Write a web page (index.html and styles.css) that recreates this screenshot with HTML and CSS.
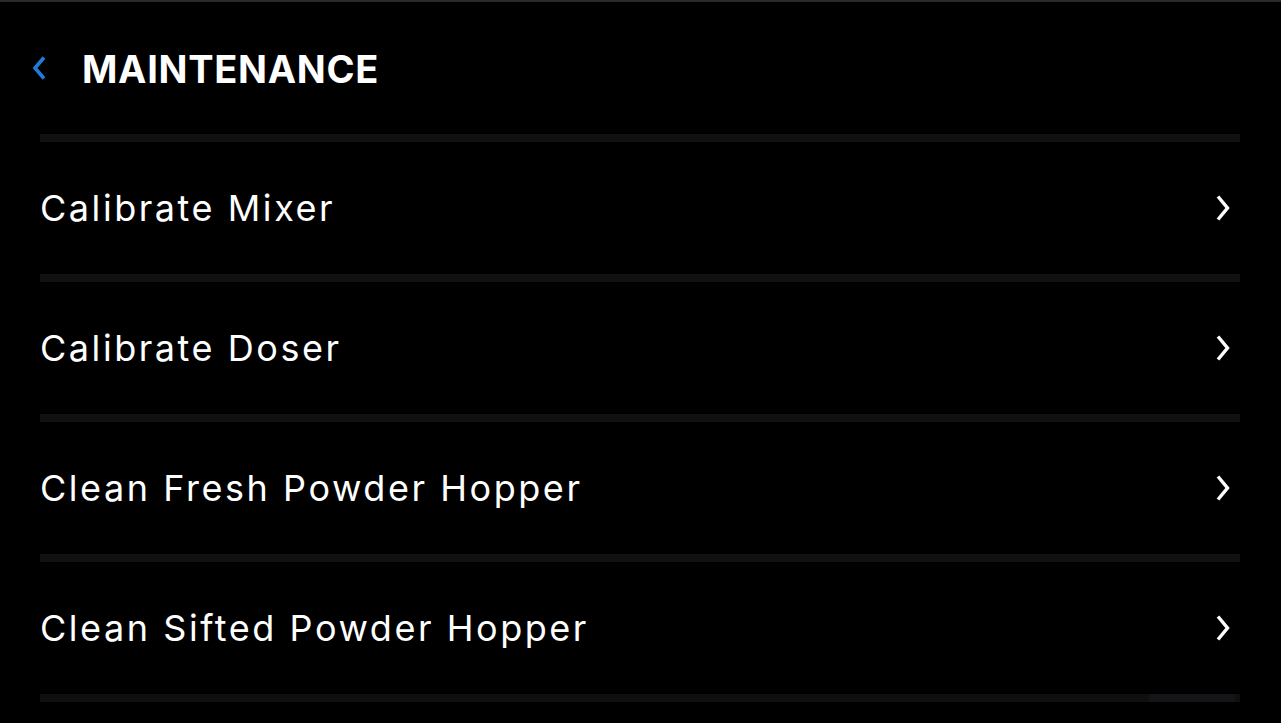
FILE: index.html
```html
<!DOCTYPE html>
<html>
<head>
<meta charset="utf-8">
<link rel="stylesheet" href="styles.css">
</head>
<body>
<div class="screen">
  <header class="header">
    <button class="back" aria-label="Back">
      <svg width="16" height="26" viewBox="0 0 16 26"><path d="M13 2.5 L4 13 L13 23.5" fill="none" stroke="#1f7bd6" stroke-width="3.6"/></svg>
    </button>
    <h1 class="title">MAINTENANCE</h1>
  </header>
  <ul class="menu">
    <li class="item"><span class="label">Calibrate Mixer</span><svg class="chev" width="18" height="28" viewBox="0 0 18 28"><path d="M4 2.5 L13.5 14 L4 25.5" fill="none" stroke="#fff" stroke-width="3.4"/></svg></li>
    <li class="item"><span class="label">Calibrate Doser</span><svg class="chev" width="18" height="28" viewBox="0 0 18 28"><path d="M4 2.5 L13.5 14 L4 25.5" fill="none" stroke="#fff" stroke-width="3.4"/></svg></li>
    <li class="item"><span class="label">Clean Fresh Powder Hopper</span><svg class="chev" width="18" height="28" viewBox="0 0 18 28"><path d="M4 2.5 L13.5 14 L4 25.5" fill="none" stroke="#fff" stroke-width="3.4"/></svg></li>
    <li class="item"><span class="label">Clean Sifted Powder Hopper</span><svg class="chev" width="18" height="28" viewBox="0 0 18 28"><path d="M4 2.5 L13.5 14 L4 25.5" fill="none" stroke="#fff" stroke-width="3.4"/></svg></li>
  </ul>
  <div class="sep last"><span class="sep-hl"></span></div>
</div>
</body>
</html>
```
FILE: styles.css
```css
html, body {
  margin: 0;
  padding: 0;
  background: #000;
  height: 100%;
  overflow: hidden;
}
.screen {
  border-top: 2px solid #2b2b2b;
  font-family: "Inter", "Open Sans", sans-serif;
  color: #fff;
}
.header {
  height: 132px;
  display: flex;
  align-items: center;
  padding-left: 31px;
  box-sizing: border-box;
}
.back {
  background: none;
  border: 0;
  padding: 0;
  width: 16px;
  height: 26px;
  display: flex;
}
.title {
  margin: 0 0 0 35px;
  font-size: 38px;
  font-weight: 700;
  letter-spacing: 0.7px;
  line-height: 1;
  padding-top: 2px;
}
.menu {
  list-style: none;
  margin: 0;
  padding: 0 41px 0 40px;
}
.item {
  height: 132px;
  border-top: 8px solid #111111;
  display: flex;
  align-items: center;
  justify-content: space-between;
}
.label {
  font-size: 36px;
  letter-spacing: 2.55px;
  line-height: 1;
}
.chev {
  margin-right: 8px;
}
.sep {
  margin: 0 41px 0 40px;
  height: 8px;
  background: #0f0f0f;
  display: flex;
  justify-content: flex-end;
}
.sep-hl {
  width: 86px;
  margin-right: 5px;
  background: #151517;
  border-radius: 2px 0 0 0;
}
```
